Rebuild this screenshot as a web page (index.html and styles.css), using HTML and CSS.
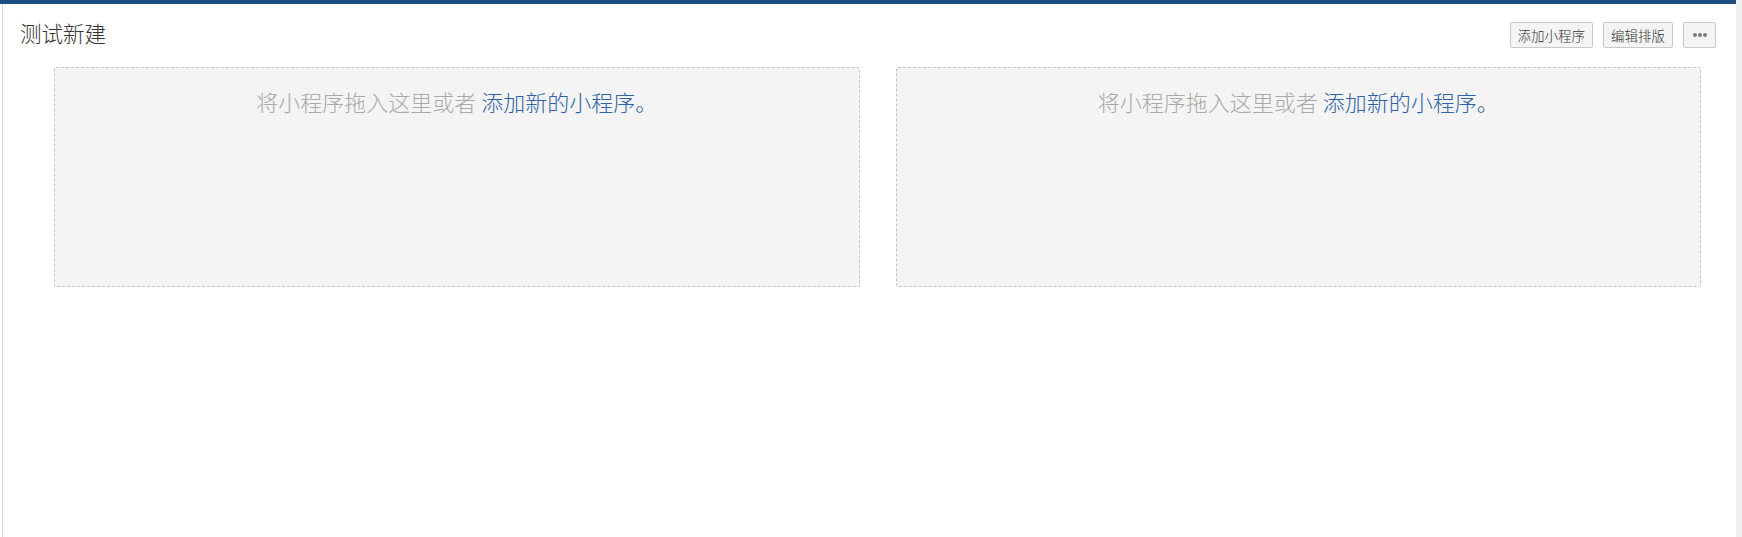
FILE: index.html
```html
<!DOCTYPE html>
<html lang="zh-CN">
<head>
<meta charset="utf-8">
<title>测试新建</title>
<link rel="stylesheet" href="styles.css">
</head>
<body>
<div class="app">
  <div class="topbar"></div>
  <div class="page">
    <div class="header">
      <h1 class="title">测试新建</h1>
      <div class="actions">
        <button class="btn">添加小程序</button>
        <button class="btn">编辑排版</button>
        <button class="btn btn-more" aria-label="更多"><span class="dot"></span><span class="dot"></span><span class="dot"></span></button>
      </div>
    </div>
    <div class="columns">
      <div class="dropzone">
        <p class="hint">将小程序拖入这里或者 <a class="link" href="#">添加新的小程序。</a></p>
      </div>
      <div class="dropzone">
        <p class="hint">将小程序拖入这里或者 <a class="link" href="#">添加新的小程序。</a></p>
      </div>
    </div>
  </div>
</div>
<div class="track"></div>
</body>
</html>
```

FILE: styles.css
```css
html, body {
  margin: 0;
  padding: 0;
  height: 100%;
}
body {
  display: flex;
  background: #ffffff;
  font-family: "Noto Sans CJK SC", "Noto Sans", sans-serif;
  color: #333333;
  overflow: hidden;
}
.app {
  flex: 1;
  display: flex;
  flex-direction: column;
  min-width: 0;
}
.topbar {
  height: 4px;
  background: #1f4d7f;
}
.page {
  flex: 1;
  margin-left: 2px;
  border-left: 1px solid #d4d4d4;
}
.track {
  width: 6px;
  background: #efefef;
}
.header {
  display: flex;
  justify-content: space-between;
  align-items: flex-start;
  padding: 18px 20px 0 17px;
}
.title {
  margin: 0;
  font-size: 21.5px;
  line-height: 22px;
  font-weight: 300;
  color: #333333;
}
.actions {
  display: flex;
  gap: 10px;
}
.btn {
  height: 26px;
  padding: 3px 7px;
  border: 1px solid #c9c9c9;
  border-radius: 2px;
  background: #f4f4f4;
  color: #333333;
  font-family: "Noto Sans CJK SC", "Noto Sans", sans-serif;
  font-size: 13.5px;
  font-weight: 300;
  line-height: 18px;
  cursor: pointer;
}
.btn-more {
  width: 33px;
  display: flex;
  align-items: center;
  justify-content: center;
  gap: 1px;
  padding: 0;
}
.dot {
  width: 4px;
  height: 4px;
  border-radius: 50%;
  background: #7a7a7a;
}
.columns {
  display: grid;
  grid-template-columns: 1fr 1fr;
  gap: 36px;
  padding: 19px 35px 0 51px;
}
.dropzone {
  height: 218px;
  border: 1px dashed #c6c6c6;
  border-radius: 2px;
  background: #f4f4f4;
}
.hint {
  margin: 0;
  padding-top: 18px;
  text-align: center;
  font-size: 22px;
  font-weight: 300;
  line-height: 30px;
  color: #a9a9a9;
}
.link {
  color: #2f62a6;
  text-decoration: none;
}
```
